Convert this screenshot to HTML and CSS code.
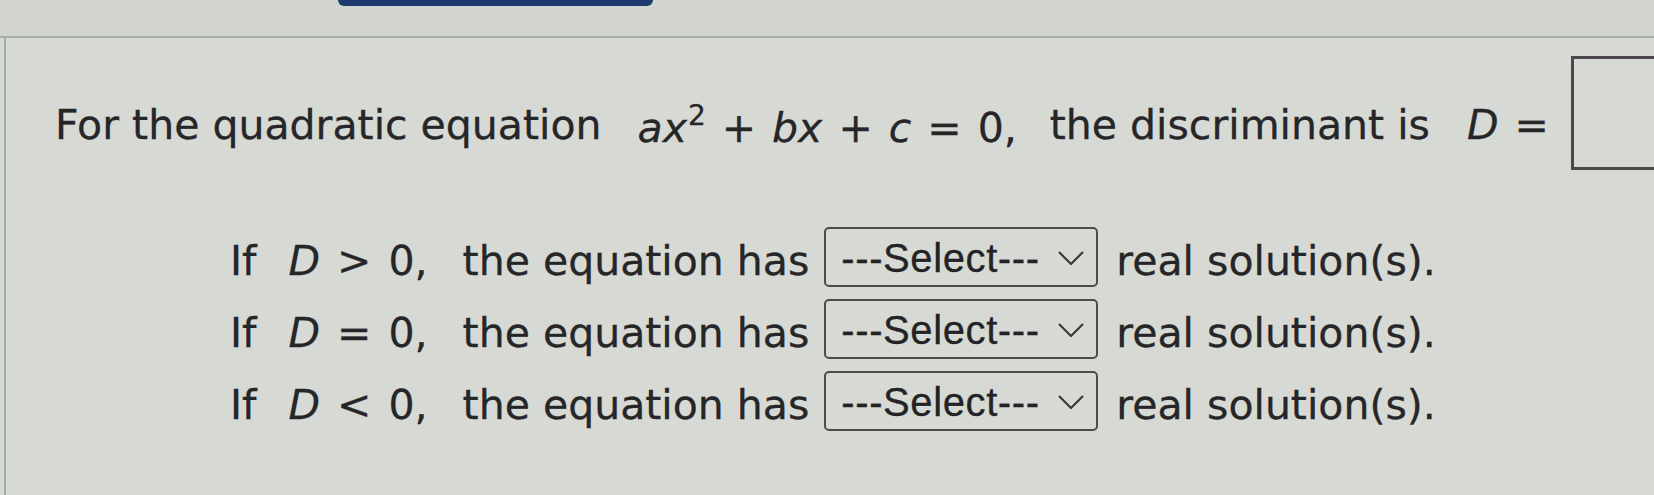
FILE: index.html
```html
<!DOCTYPE html>
<html lang="en">
<head>
  <meta charset="UTF-8">
  <title>Discriminant</title>
  <link rel="stylesheet" href="styles.css">
</head>
<body>

<div class="top">
  <div class="tab"></div>
</div>

<div class="panel">
  <div class="prompt">
    <span class="words">For the quadratic equation</span>
    <span class="math eq"><i>a</i><i>x</i><sup>2</sup><span class="op">+</span><i>b</i><i>x</i><span class="op">+</span><i>c</i><span class="op">=</span>0,</span>
    <span class="words">the discriminant is</span>
    <span class="math disc"><i>D</i><span class="op">=</span></span>
    <span class="answer"></span>
  </div>

  <div class="rows">
    <div class="row">
      <span class="words">If</span>
      <span class="math"><i>D</i><span class="op">&gt;</span>0,</span>
      <span class="words">the equation has</span>
      <div class="select"><span>---Select---</span><svg viewBox="0 0 28 16" width="28" height="16"><polyline points="2,2 14,14 26,2"/></svg></div>
      <span class="words">real solution(s).</span>
    </div>
    <div class="row">
      <span class="words">If</span>
      <span class="math"><i>D</i><span class="op">=</span>0,</span>
      <span class="words">the equation has</span>
      <div class="select"><span>---Select---</span><svg viewBox="0 0 28 16" width="28" height="16"><polyline points="2,2 14,14 26,2"/></svg></div>
      <span class="words">real solution(s).</span>
    </div>
    <div class="row">
      <span class="words">If</span>
      <span class="math"><i>D</i><span class="op">&lt;</span>0,</span>
      <span class="words">the equation has</span>
      <div class="select"><span>---Select---</span><svg viewBox="0 0 28 16" width="28" height="16"><polyline points="2,2 14,14 26,2"/></svg></div>
      <span class="words">real solution(s).</span>
    </div>
  </div>
</div>

</body>
</html>
```

FILE: styles.css
```css
html, body {
  margin: 0;
  height: 100%;
  overflow: hidden;
}
body {
  display: flex;
  flex-direction: column;
  background: #d6d9d4;
  font-family: "DejaVu Sans", Verdana, sans-serif;
  color: #262629;
  -webkit-text-stroke: 0.3px #262629;
}
.top {
  flex: none;
  height: 36px;
  background: #d2d5d0;
  border-bottom: 2px solid #a8aeaa;
}
.tab {
  width: 315px;
  height: 6px;
  margin-left: 338px;
  background: #1e3a70;
  border-radius: 0 0 8px 8px;
}
.panel {
  flex: 1;
  margin-left: 4px;
  border-left: 2px solid #a4aba8;
  padding: 18px 0 0 49px;
}
.math i {
  font-style: italic;
}

/* first line */
.prompt {
  display: flex;
  align-items: flex-start;
  font-size: 41px;
  line-height: 46px;
  white-space: nowrap;
}
.prompt .words,
.prompt .math {
  margin-top: 46px;
}
.prompt .op {
  padding: 0 16px;
}
.prompt .eq {
  margin: 46px 33px 0 36px;
}
.prompt .disc {
  margin-left: 37px;
}
.prompt sup {
  font-size: 28px;
  line-height: 1;
  vertical-align: 17px;
  margin-left: 1px;
}
.answer {
  box-sizing: border-box;
  flex: none;
  width: 140px;
  height: 114px;
  margin-left: 6px;
  border: 3px solid #4c484c;
}

/* condition rows */
.rows {
  margin: 57px 0 0 175px;
  font-size: 41px;
}
.row {
  display: flex;
  align-items: center;
  height: 60px;
  margin-bottom: 12px;
  white-space: nowrap;
}
.row .words,
.row .math {
  padding-top: 8px;
}
.row .math {
  margin: 0 35px 0 32px;
}
.row .op {
  padding: 0 17px;
}
.select {
  box-sizing: border-box;
  display: flex;
  align-items: center;
  justify-content: space-between;
  width: 274px;
  height: 60px;
  margin: 0 18px 0 15px;
  padding: 2px 11px 0 15px;
  border: 2px solid #4d4b4e;
  border-radius: 5px;
  font-family: "Liberation Sans", Arial, sans-serif;
  font-size: 40px;
  letter-spacing: 0.6px;
  color: #232325;
  -webkit-text-stroke: 0.3px #232325;
}
.select svg {
  fill: none;
  stroke: #3a3a3c;
  stroke-width: 2.2;
}
```
